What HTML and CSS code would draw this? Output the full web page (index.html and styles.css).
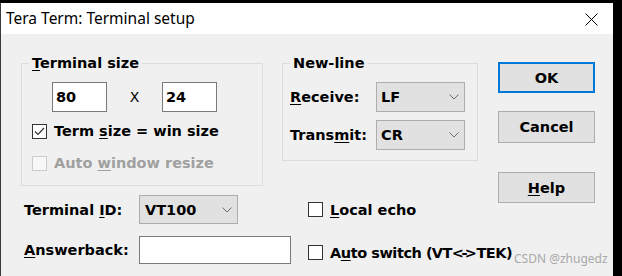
FILE: index.html
```html
<!DOCTYPE html>
<html>
<head>
<meta charset="utf-8">
<title>Tera Term: Terminal setup</title>
<link rel="stylesheet" href="styles.css">
</head>
<body>
<div class="window">
  <div class="titlebar">
    <span class="title">Tera Term: Terminal setup</span>
    <svg class="close" width="13" height="13" viewBox="0 0 13 13"><path d="M0.5 0.5 L12.5 12.5 M12.5 0.5 L0.5 12.5" stroke="#000" stroke-width="1" fill="none"/></svg>
  </div>
  <div class="content">
    <div class="main">
      <div class="top">
        <fieldset class="group size">
          <legend><u>T</u>erminal size</legend>
          <div class="size-row">
            <div class="field small">80</div>
            <span class="times">X</span>
            <div class="field small">24</div>
          </div>
          <div class="check first">
            <span class="cb"><svg width="13" height="13" viewBox="0 0 13 13"><path d="M2 6.5 L5 9.5 L11 3" stroke="#333" stroke-width="1.2" fill="none"/></svg></span>
            <span>Term <u>s</u>ize = win size</span>
          </div>
          <div class="check disabled">
            <span class="cb"></span>
            <span>Auto <u>w</u>indow resize</span>
          </div>
        </fieldset>
        <fieldset class="group newline">
          <legend>New-line</legend>
          <div class="nl-row">
            <span class="nl-label"><u>R</u>eceive:</span>
            <div class="select nl-select"><span>LF</span><svg class="chev" width="10" height="6" viewBox="0 0 10 6"><path d="M0.5 0.5 L5 5 L9.5 0.5" stroke="#6d6d6d" fill="none"/></svg></div>
          </div>
          <div class="nl-row second">
            <span class="nl-label">Trans<u>m</u>it:</span>
            <div class="select nl-select"><span>CR</span><svg class="chev" width="10" height="6" viewBox="0 0 10 6"><path d="M0.5 0.5 L5 5 L9.5 0.5" stroke="#6d6d6d" fill="none"/></svg></div>
          </div>
        </fieldset>
      </div>
      <div class="bottom">
        <div class="ids">
          <span class="id-label">Terminal <u>I</u>D:</span>
          <div class="select id-select"><span>VT100</span><svg class="chev" width="10" height="6" viewBox="0 0 10 6"><path d="M0.5 0.5 L5 5 L9.5 0.5" stroke="#6d6d6d" fill="none"/></svg></div>
          <span class="id-label"><u>A</u>nswerback:</span>
          <div class="field answer"></div>
        </div>
        <div class="checks">
          <div class="check row1">
            <span class="cb"></span>
            <span><u>L</u>ocal echo</span>
          </div>
          <div class="check row2">
            <span class="cb"></span>
            <span class="tight">A<u>u</u>to switch <span class="paren">(</span>VT<span class="arrows">&lt;-&gt;</span>TEK<span class="paren">)</span></span>
          </div>
        </div>
      </div>
    </div>
    <div class="buttons">
      <div class="btn default">OK</div>
      <div class="btn cancel">Cancel</div>
      <div class="btn help"><u>H</u>elp</div>
    </div>
  </div>
  <div class="watermark">CSDN @zhugedz</div>
</div>
</body>
</html>
```
FILE: styles.css
```css
html, body {
  margin: 0;
  padding: 0;
  background: #000;
}
body {
  width: 622px;
  height: 276px;
  overflow: hidden;
}
.window {
  position: relative;
  width: 612px;
  height: 273px;
  margin-top: 3px;
  border-left: 1px solid #3a3a3a;
  background: #f0f0f0;
  display: flex;
  flex-direction: column;
  font-family: "DejaVu Sans", "Liberation Sans", sans-serif;
  font-weight: bold;
  font-size: 14.5px;
  color: #000;
}
u {
  text-decoration-thickness: 1px;
  text-underline-offset: 2px;
}
.titlebar {
  height: 31px;
  background: #fff;
  display: flex;
  align-items: center;
  justify-content: space-between;
  padding: 0 15px 0 5px;
}
.title {
  font-family: "Noto Sans", "Open Sans", sans-serif;
  font-weight: normal;
  font-size: 15.5px;
  line-height: 31px;
  color: #000;
}
.close {
  display: block;
  margin-top: 1px;
}
.content {
  flex: 1;
  display: flex;
  align-items: flex-start;
  padding: 20px 0 0 20px;
}
.main {
  width: 457px;
  flex: none;
}
.top {
  display: flex;
  align-items: flex-start;
}
.group {
  margin: 0;
  padding: 0;
  border: 1px solid #dcdcdc;
  box-sizing: border-box;
  min-width: 0;
}
.group legend {
  margin-left: 7px;
  padding: 0 3px;
  line-height: 18px;
  font-size: 14.5px;
}
.size {
  width: 242px;
  height: 132px;
}
.newline {
  width: 196px;
  height: 107px;
  margin-left: 19px;
}
.size-row {
  display: flex;
  align-items: center;
  margin-top: 10px;
  padding-left: 30px;
}
.field {
  box-sizing: border-box;
  background: #fff;
  border: 1px solid #7a7a7a;
  display: flex;
  align-items: center;
  padding-left: 3px;
}
.field.small {
  width: 55px;
  height: 30px;
}
.times {
  width: 55px;
  text-align: center;
  font-family: "DejaVu Sans", sans-serif;
  font-weight: normal;
  font-size: 14px;
}
.check {
  display: flex;
  align-items: center;
  gap: 7px;
  height: 18px;
  white-space: nowrap;
}
.group .check {
  margin-left: 10px;
}
.check.first {
  margin-top: 10px;
}
.check.disabled {
  margin-top: 14px;
  color: #a0a0a0;
}
.cb {
  box-sizing: border-box;
  width: 15px;
  height: 15px;
  border: 1px solid #333;
  background: #fff;
  display: flex;
  align-items: center;
  justify-content: center;
  flex: none;
}
.cb svg {
  display: block;
}
.check.disabled .cb {
  border-color: #cccccc;
  background: #f7f7f7;
}
.nl-row {
  display: flex;
  align-items: center;
  margin-top: 10px;
  padding-left: 7px;
}
.nl-row.second {
  margin-top: 8px;
}
.nl-label {
  width: 86px;
  flex: none;
}
.select {
  box-sizing: border-box;
  background: #e1e1e1;
  border: 1px solid #adadad;
  display: flex;
  align-items: center;
  justify-content: space-between;
  padding: 0 5px 0 4px;
}
.chev {
  display: block;
}
.nl-select {
  width: 89px;
  height: 30px;
}
.bottom {
  display: flex;
  align-items: flex-start;
  margin-top: 9px;
}
.ids {
  width: 287px;
  flex: none;
  display: grid;
  grid-template-columns: 118px auto;
  grid-template-rows: 29px 28px;
  row-gap: 12px;
  align-items: center;
}
.id-label {
  padding-left: 3px;
}
.id-select {
  width: 99px;
  height: 29px;
  padding-left: 5px;
}
.answer {
  width: 152px;
  height: 28px;
}
.checks {
  display: flex;
  flex-direction: column;
}
.checks .check {
  height: 29px;
}
.checks .row2 {
  margin-top: 14px;
}
.tight {
  letter-spacing: -0.45px;
}
.arrows {
  letter-spacing: -2.6px;
  margin-right: 2px;
}
.paren {
  letter-spacing: -1px;
}
.buttons {
  width: 97px;
  margin: 8px 0 0 20px;
  display: flex;
  flex-direction: column;
}
.btn {
  box-sizing: border-box;
  height: 31px;
  background: #e1e1e1;
  border: 1px solid #adadad;
  display: flex;
  align-items: center;
  justify-content: center;
}
.btn.default {
  border: 2px solid #0078d7;
}
.btn.cancel {
  margin-top: 18px;
  height: 32px;
}
.btn.help {
  margin-top: 29px;
}
.watermark {
  position: absolute;
  left: 513px;
  top: 247px;
  font-family: "Noto Sans", "Open Sans", sans-serif;
  font-weight: normal;
  font-size: 12px;
  color: #a9a9a9;
  white-space: nowrap;
}
```
